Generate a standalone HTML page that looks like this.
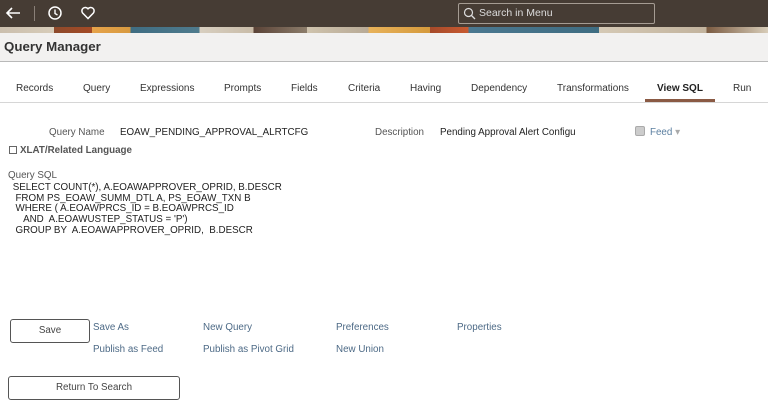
<!DOCTYPE html>
<html><head><meta charset="utf-8"><style>
*{margin:0;padding:0;box-sizing:border-box}
body{width:768px;height:414px;background:#fff;font-family:"Liberation Sans",Arial,sans-serif;position:relative;overflow:hidden;color:#333}
.abs{position:absolute;white-space:nowrap}
.hdr{position:absolute;left:0;top:0;width:768px;height:27px;background:#463c34}
.stripe{position:absolute;left:0;top:27px;width:768px;height:6px;background:linear-gradient(90deg,#cbbfae 0,#d7ccb9 7%,#8d4a2c 7%,#a44a25 12%,#e6a34a 12%,#d89a40 17%,#3f6d82 17%,#4f7b8d 26%,#d8cfc0 26%,#c9bca8 33%,#5a4236 33%,#8c7d6b 40%,#cfc3ad 40%,#b8aa96 48%,#e8b25a 48%,#d59a3c 56%,#a64a2a 56%,#c85a30 61%,#4b7890 61%,#3f6d82 78%,#d5c9b5 78%,#c2b39d 92%,#7a5a40 92%,#d8cdb9 100%)}
.title{position:absolute;left:0;top:33px;width:768px;height:29px;background:#f2f1f0;border-bottom:1px solid #b9b9b9}
.tabs{position:absolute;left:0;top:102px;width:768px;height:1px;background:#d6d6d6}
.tab{position:absolute;top:83px;font-size:10px;color:#333}
.lbl{font-size:9.8px;color:#555}
.val{font-size:9.8px;color:#222}
.lnk{font-size:9.8px;color:#4d6a86}
.btn{position:absolute;border:1px solid #555;border-radius:3px;font-size:9.8px;color:#444;text-align:center}
pre{font-family:"Liberation Sans",Arial,sans-serif;font-size:9.8px;line-height:10.7px;color:#222;white-space:pre !important}
</style></head><body>
<div class="hdr">
<svg class="abs" style="left:4px;top:5px" width="18" height="16" viewBox="0 0 18 16"><path d="M16 8H3M8 3L3 8l5 5" stroke="#fff" stroke-width="1.6" fill="none"/></svg>
<div class="abs" style="left:34px;top:6px;width:1px;height:15px;background:#8a8078"></div>
<svg class="abs" style="left:47px;top:5px" width="16" height="16" viewBox="0 0 16 16"><circle cx="8" cy="8" r="6" stroke="#fff" stroke-width="1.5" fill="none"/><path d="M8 4.5V8.5l2.5 1.5" stroke="#fff" stroke-width="1.4" fill="none"/></svg>
<svg class="abs" style="left:80px;top:5px" width="16" height="16" viewBox="0 0 16 16"><path d="M8 13.5L2.6 8A3.2 3.2 0 0 1 8 3.8 3.2 3.2 0 0 1 13.4 8z" stroke="#fff" stroke-width="1.5" fill="none"/></svg>
<div class="abs" style="left:458px;top:3px;width:197px;height:21px;border:1px solid #a59c93;border-radius:2px"></div>
<svg class="abs" style="left:463px;top:7px" width="13" height="13" viewBox="0 0 13 13"><circle cx="5.5" cy="5.5" r="4" stroke="#ddd" stroke-width="1.2" fill="none"/><path d="M8.5 8.5L12 12" stroke="#ddd" stroke-width="1.3"/></svg>
<div class="abs" style="left:479px;top:7px;font-size:10.5px;color:#ddd">Search in Menu</div>
</div>
<div class="stripe"></div>
<div class="title"><div class="abs" style="left:4px;top:6px;font-size:13.3px;font-weight:bold;color:#333">Query Manager</div></div>
<div class="tabs"></div>
<div class="tab" style="left:16px">Records</div>
<div class="tab" style="left:83px">Query</div>
<div class="tab" style="left:140px">Expressions</div>
<div class="tab" style="left:224px">Prompts</div>
<div class="tab" style="left:291px">Fields</div>
<div class="tab" style="left:348px">Criteria</div>
<div class="tab" style="left:410px">Having</div>
<div class="tab" style="left:471px">Dependency</div>
<div class="tab" style="left:557px">Transformations</div>
<div class="tab" style="left:657px;font-weight:bold;color:#222">View SQL</div>
<div class="abs" style="left:645px;top:99px;width:70px;height:3px;background:#8a5a44"></div>
<div class="tab" style="left:733px">Run</div>
<div class="abs lbl" style="left:49px;top:127px">Query Name</div>
<div class="abs val" style="left:120px;top:127px">EOAW_PENDING_APPROVAL_ALRTCFG</div>
<div class="abs lbl" style="left:375px;top:127px">Description</div>
<div class="abs val" style="left:440px;top:127px">Pending Approval Alert Configu</div>
<div class="abs" style="left:635px;top:126px;width:10px;height:10px;background:#ccc;border:1px solid #aaa;border-radius:2px"></div>
<div class="abs lnk" style="left:650px;top:127px;color:#5b7fa0">Feed <span style="color:#aaa">▾</span></div>
<div class="abs" style="left:9px;top:146px;width:8px;height:8px;border:1px solid #666"></div>
<div class="abs lbl" style="left:20px;top:145px;font-weight:bold;color:#555">XLAT/Related Language</div>
<div class="abs lbl" style="left:8px;top:170px">Query SQL</div>
<pre class="abs" style="left:10px;top:183px"> SELECT COUNT(*), A.EOAWAPPROVER_OPRID, B.DESCR
  FROM PS_EOAW_SUMM_DTL A, PS_EOAW_TXN B
  WHERE ( A.EOAWPRCS_ID = B.EOAWPRCS_ID
     AND  A.EOAWUSTEP_STATUS = 'P')
  GROUP BY  A.EOAWAPPROVER_OPRID,  B.DESCR</pre>
<div class="btn" style="left:10px;top:319px;width:80px;height:24px;line-height:22px">Save</div>
<div class="abs lnk" style="left:93px;top:322px">Save As</div>
<div class="abs lnk" style="left:203px;top:322px">New Query</div>
<div class="abs lnk" style="left:336px;top:322px">Preferences</div>
<div class="abs lnk" style="left:457px;top:322px">Properties</div>
<div class="abs lnk" style="left:93px;top:344px">Publish as Feed</div>
<div class="abs lnk" style="left:203px;top:344px">Publish as Pivot Grid</div>
<div class="abs lnk" style="left:336px;top:344px">New Union</div>
<div class="btn" style="left:8px;top:376px;width:172px;height:24px;line-height:22px">Return To Search</div>
</body></html>
